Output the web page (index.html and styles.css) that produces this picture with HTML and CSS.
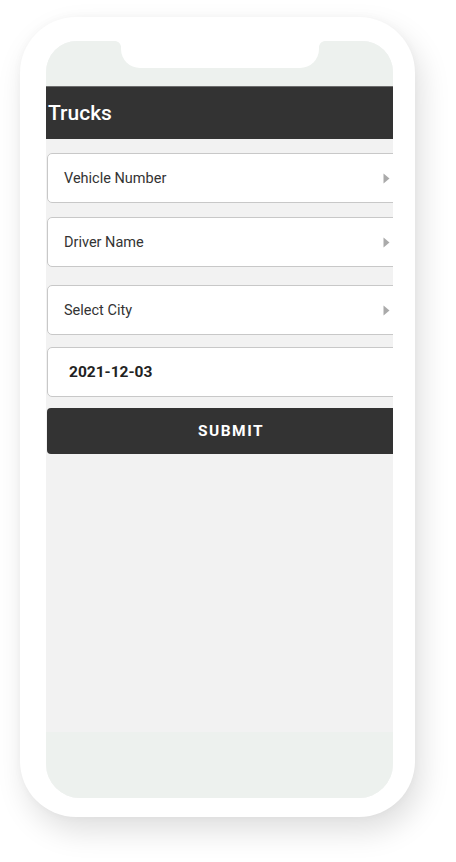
FILE: index.html
```
<!DOCTYPE html>
<html lang="en">
<head>
<meta charset="utf-8">
<title>Trucks</title>
<link rel="stylesheet" href="styles.css">
</head>
<body>
<div class="phone">
  <div class="screen">
    <div class="statusbar">
      <div class="notch"></div>
    </div>
    <div class="appbar">
      <span class="title">Trucks</span>
    </div>
    <div class="content">
      <div class="form">
        <div class="field f1">
          <span class="label">Vehicle Number</span>
          <svg class="arrow" width="7" height="11" viewBox="0 0 7 11"><polygon points="0.5,0.5 6.5,5.5 0.5,10.5" fill="#aaaaaa"/></svg>
        </div>
        <div class="field f2">
          <span class="label">Driver Name</span>
          <svg class="arrow" width="7" height="11" viewBox="0 0 7 11"><polygon points="0.5,0.5 6.5,5.5 0.5,10.5" fill="#aaaaaa"/></svg>
        </div>
        <div class="field f3">
          <span class="label">Select City</span>
          <svg class="arrow" width="7" height="11" viewBox="0 0 7 11"><polygon points="0.5,0.5 6.5,5.5 0.5,10.5" fill="#aaaaaa"/></svg>
        </div>
        <div class="field date">
          <span class="datevalue">2021-12-03</span>
        </div>
        <div class="submit">SUBMIT</div>
      </div>
    </div>
    <div class="homebar"></div>
  </div>
</div>
</body>
</html>
```
FILE: styles.css
```
* { box-sizing: border-box; }
html, body {
  margin: 0;
  padding: 0;
  background: #ffffff;
  font-family: Roboto, "Noto Sans", "Liberation Sans", sans-serif;
}
body {
  width: 456px;
  height: 862px;
  overflow: hidden;
  padding: 17px 0 0 20px;
}
.phone {
  width: 395px;
  height: 800px;
  background: #ffffff;
  border-radius: 56px;
  padding: 24px 22px 19px 26px;
  box-shadow: 6px 14px 30px rgba(0,0,0,0.13), 0 0 10px rgba(0,0,0,0.03);
}
.screen {
  width: 347px;
  height: 757px;
  border-radius: 31px 31px 34px 34px;
  overflow: hidden;
  background: #f2f2f2;
  display: flex;
  flex-direction: column;
}
.statusbar {
  height: 45px;
  flex: none;
  background: #edf1ee;
  display: flex;
  justify-content: center;
}
.notch {
  position: relative;
  width: 198px;
  height: 27px;
  background: #ffffff;
  border-radius: 0 0 19px 19px;
}
.notch::before,
.notch::after {
  content: "";
  position: absolute;
  top: 0;
  width: 6px;
  height: 6px;
}
.notch::before {
  left: -6px;
  background: radial-gradient(circle at 0 100%, rgba(255,255,255,0) 5.5px, #ffffff 6.2px);
}
.notch::after {
  right: -6px;
  background: radial-gradient(circle at 100% 100%, rgba(255,255,255,0) 5.5px, #ffffff 6.2px);
}
.appbar {
  height: 53px;
  flex: none;
  background: #333333;
  border-top: 1px solid #6d6d6d;
  display: flex;
  align-items: center;
  padding-left: 2px;
}
.title {
  color: #ffffff;
  font-size: 21px;
  font-weight: 500;
}
.content {
  flex: 1;
  background: #f2f2f2;
  overflow: hidden;
}
.form {
  width: 368px;
  margin-left: 1px;
  display: flex;
  flex-direction: column;
}
.field {
  height: 50px;
  background: #ffffff;
  border: 1px solid #c8c8c8;
  border-radius: 5px;
  display: flex;
  align-items: center;
  justify-content: space-between;
  padding: 0 24px 0 16px;
}
.f1 { margin-top: 14px; }
.f2 { margin-top: 14px; }
.f3 { margin-top: 18px; }
.date { margin-top: 12px; padding-left: 21px; }
.label {
  font-size: 14.5px;
  color: #333333;
}
.arrow { display: block; }
.datevalue {
  font-size: 15.5px;
  font-weight: 700;
  color: #222222;
}
.submit {
  margin-top: 11px;
  height: 46px;
  background: #333333;
  border-radius: 4px;
  color: #ffffff;
  font-size: 15.5px;
  font-weight: 700;
  letter-spacing: 1.5px;
  display: flex;
  align-items: center;
  justify-content: center;
}
.homebar {
  height: 66px;
  flex: none;
  background: #edf1ee;
}
```
